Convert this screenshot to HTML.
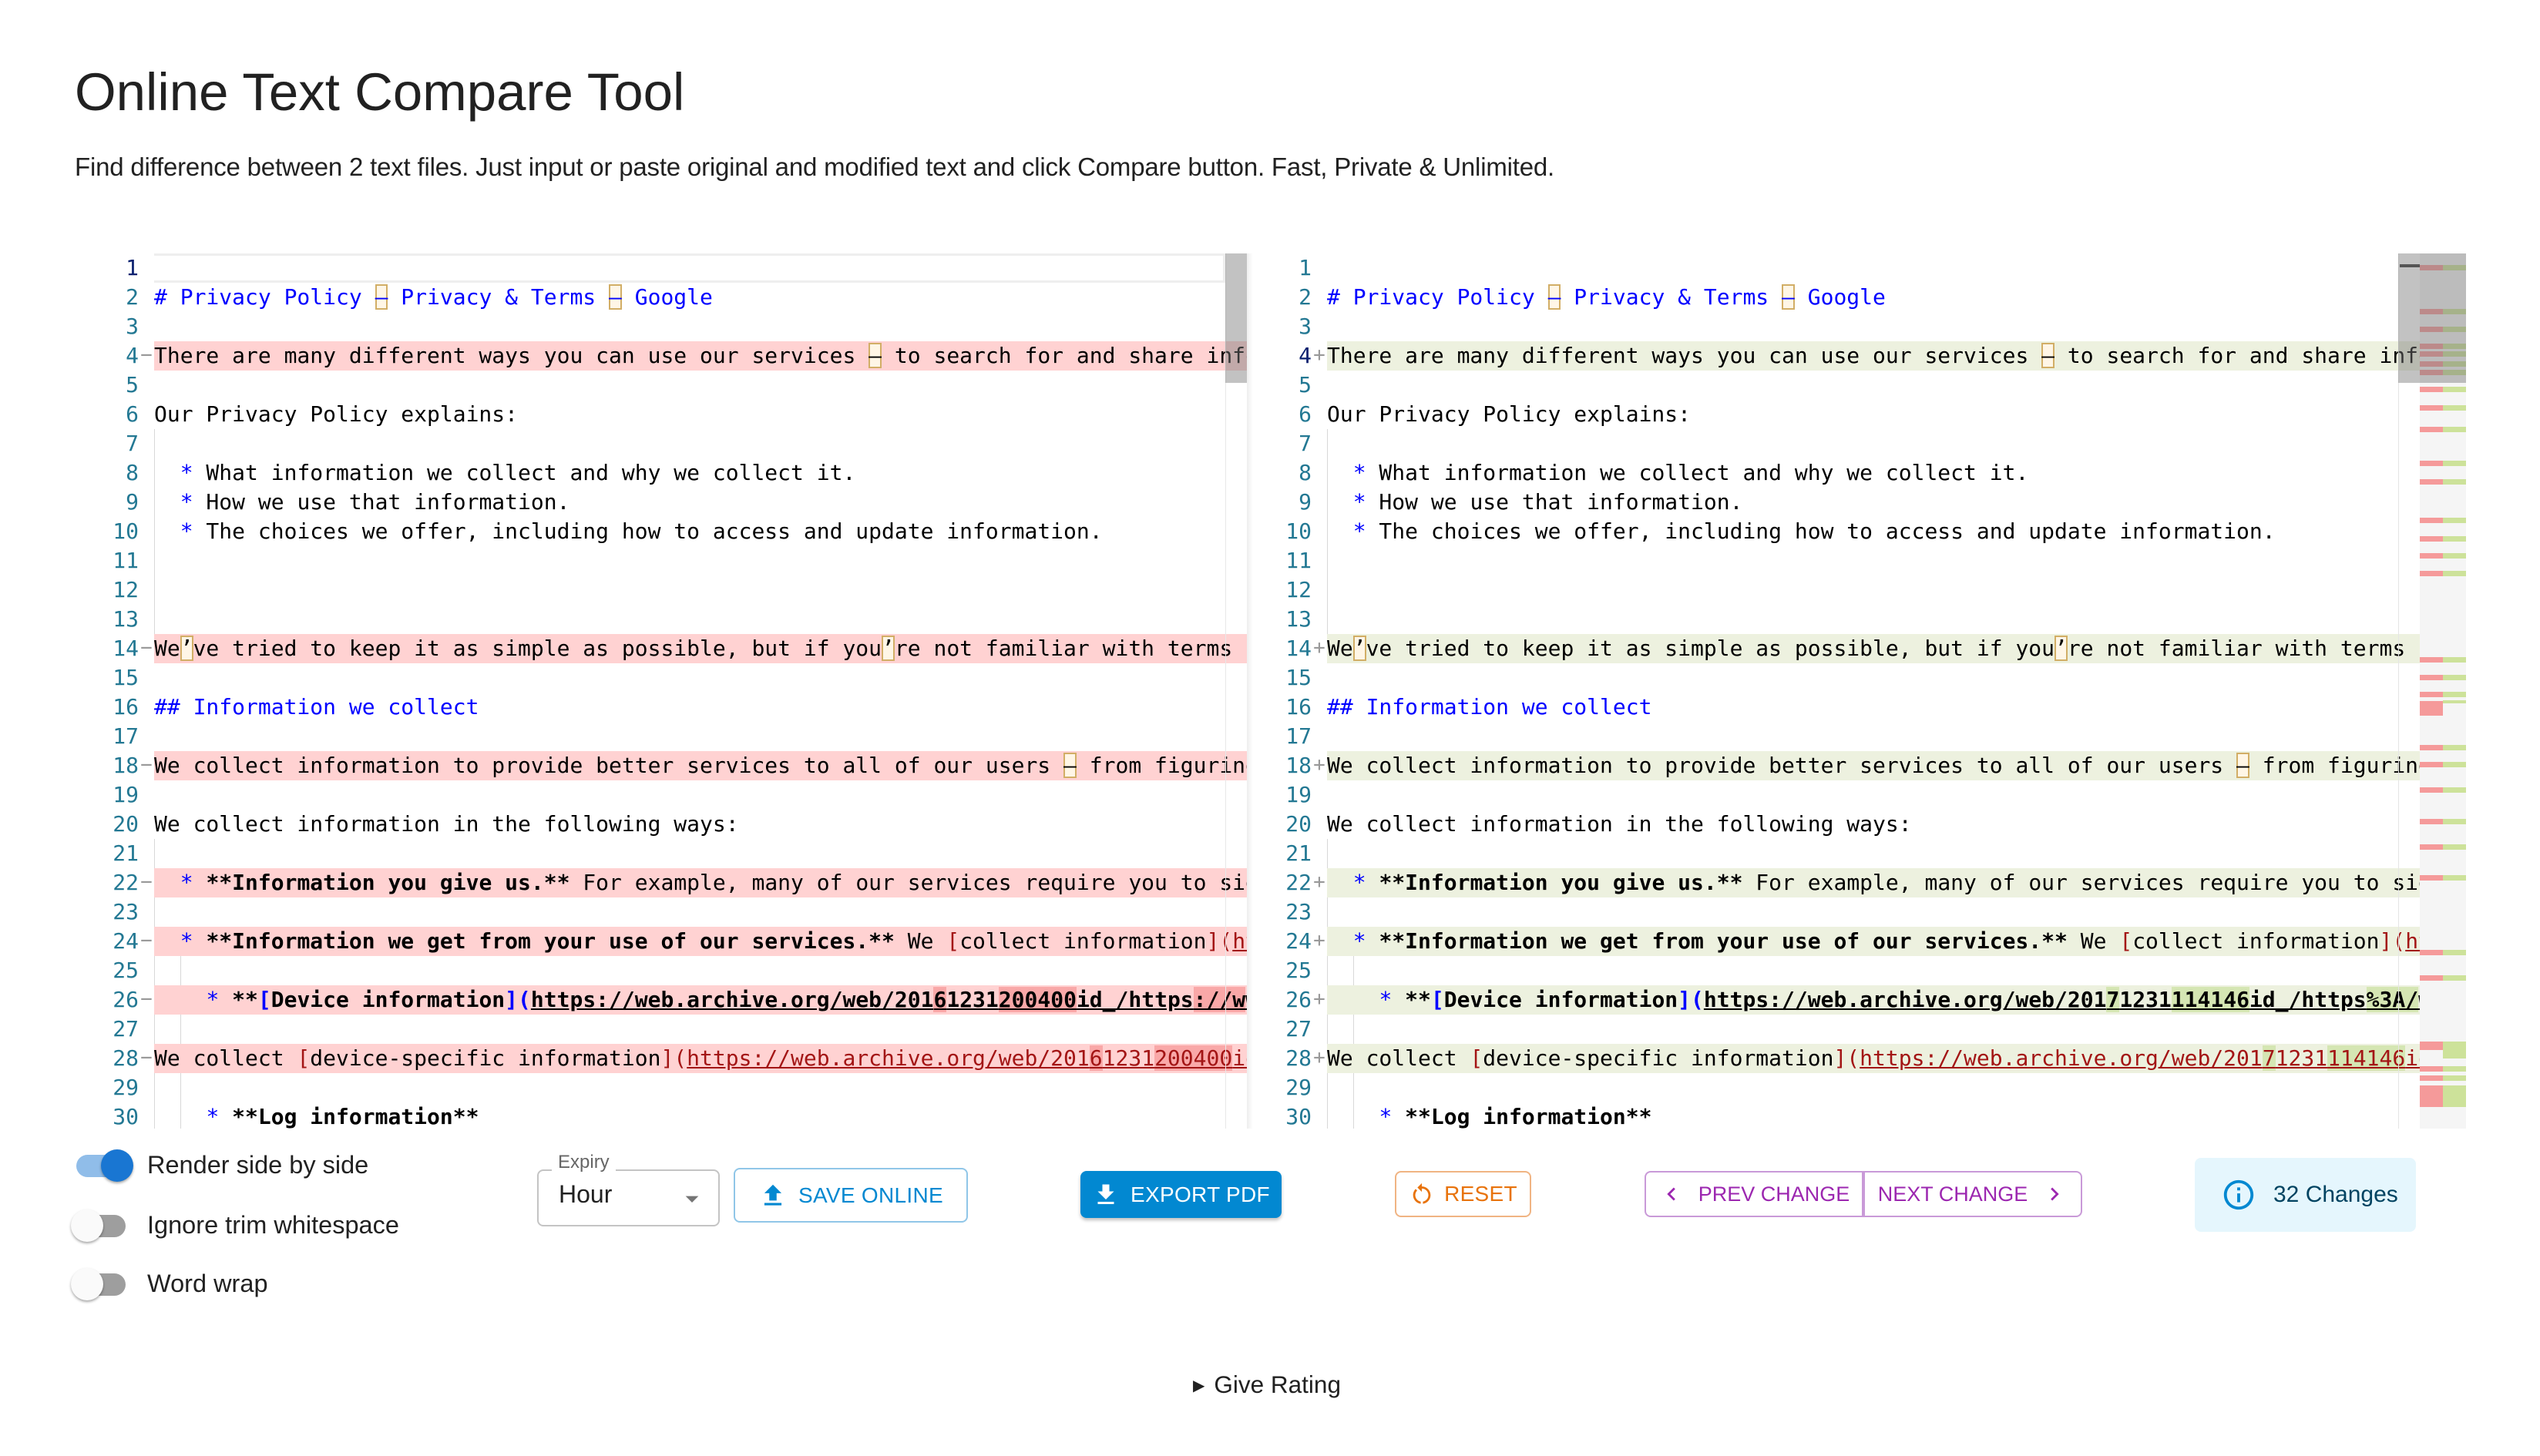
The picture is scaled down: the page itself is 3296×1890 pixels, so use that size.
<!DOCTYPE html>
<html><head><meta charset="utf-8">
<style>
*{margin:0;padding:0;box-sizing:border-box}
body{width:3296px;height:1890px;background:#fff;position:relative;overflow:hidden;font-family:"Liberation Sans",sans-serif;color:#212121}
.abs{position:absolute}
.ed{position:absolute;top:329px;height:1136px;overflow:hidden;font-family:"DejaVu Sans Mono",monospace;font-size:28px}
.ln{position:absolute;height:38px;line-height:38px;white-space:pre;color:#000}
.num{position:absolute;width:60px;text-align:right;height:38px;line-height:38px;color:#237893;font-family:"DejaVu Sans Mono",monospace;font-size:28px}
.mk{position:absolute;width:20px;text-align:center;height:38px;line-height:36px;color:#999;font-family:"DejaVu Sans Mono",monospace;font-size:26px}
.del{background:#ffd2d2}
.ins{background:#edf1df}
.dc{background:#f9a8a8}
.ic{background:#d5e6b3}
.b{color:#0000ff}
.r{color:#a31515}
.u{text-decoration:underline}
.bo{font-weight:bold}
.uc{box-shadow:inset 0 0 0 2px #d2ae66;background:#fff6e6}
.guide{position:absolute;width:1px;background:#d8d8d8}
.btn{position:absolute;display:flex;align-items:center;justify-content:center;border-radius:8px;font-size:28px;letter-spacing:.3px}
.tg{position:absolute;width:64px;height:29px;border-radius:15px;background:#9e9e9e}
.th{position:absolute;width:42px;height:42px;border-radius:50%;background:#fafafa;box-shadow:0 2px 3px rgba(0,0,0,.35)}
.lbl{position:absolute;font-size:32.5px;color:#212121}
.mm{position:absolute;height:7px}
</style></head><body>

<div class="abs" style="left:97px;top:80px;font-size:69px;line-height:80px;letter-spacing:0;color:#212121">Online Text Compare Tool</div>
<div class="abs" style="left:97px;top:196px;font-size:33px;line-height:42px;letter-spacing:-0.2px;color:#212121">Find difference between 2 text files. Just input or paste original and modified text and click Compare button. Fast, Private &amp; Unlimited.</div>

<!-- LEFT EDITOR -->
<div class="ed" style="left:0;width:1618px">
  <div class="abs" style="left:200px;top:0;width:1390px;height:38px;border:3px solid #eeeeee;border-left:none"></div>
  <div class="guide" style="left:200px;top:228px;height:266px"></div>
  <div class="guide" style="left:200px;top:760px;height:380px"></div>
  <div class="guide" style="left:234px;top:912px;height:228px"></div>

  <div class="ln" style="left:200px;top:38px"><span class="b"># Privacy Policy <span class="uc">–</span> Privacy &amp; Terms <span class="uc">–</span> Google</span></div>
  <div class="ln del" style="left:200px;top:114px;width:1420px">There are many different ways you can use our services <span class="uc">–</span> to search for and share information</div>
  <div class="ln" style="left:200px;top:190px">Our Privacy Policy explains:</div>
  <div class="ln" style="left:200px;top:266px">  <span class="b">*</span> What information we collect and why we collect it.</div>
  <div class="ln" style="left:200px;top:304px">  <span class="b">*</span> How we use that information.</div>
  <div class="ln" style="left:200px;top:342px">  <span class="b">*</span> The choices we offer, including how to access and update information.</div>
  <div class="ln del" style="left:200px;top:494px;width:1420px">We<span class="uc">’</span>ve tried to keep it as simple as possible, but if you<span class="uc">’</span>re not familiar with terms like cookies</div>
  <div class="ln" style="left:200px;top:570px"><span class="b">## Information we collect</span></div>
  <div class="ln del" style="left:200px;top:646px;width:1420px">We collect information to provide better services to all of our users <span class="uc">–</span> from figuring out basic stuff</div>
  <div class="ln" style="left:200px;top:722px">We collect information in the following ways:</div>
  <div class="ln del" style="left:200px;top:798px;width:1420px">  <span class="b">*</span> <span class="bo">**Information you give us.**</span> For example, many of our services require you to sign up</div>
  <div class="ln del" style="left:200px;top:874px;width:1420px">  <span class="b">*</span> <span class="bo">**Information we get from your use of our services.**</span> We <span class="r">[</span>collect information<span class="r">](<span class="u">https://</span></span></div>
  <div class="ln del" style="left:200px;top:950px;width:1420px">    <span class="b">*</span> <span class="bo">**<span class="b">[</span>Device information<span class="b">](</span><span class="u">https://web.archive.org/web/201<span class="dc">6</span>1231<span class="dc">200400</span>id_/https<span class="dc">://w</span>ww</span></span></div>
  <div class="ln del" style="left:200px;top:1026px;width:1420px">We collect <span class="r">[</span>device-specific information<span class="r">](<span class="u">https://web.archive.org/web/201<span class="dc">6</span>1231<span class="dc">200400</span>id_</span></span></div>
  <div class="ln" style="left:200px;top:1102px">    <span class="b">*</span> <span class="bo">**Log information**</span></div>

  <div class="abs" style="left:1590px;top:0;width:1px;height:1140px;background:#e8e8e8"></div>
  <div class="abs" style="left:1590px;top:0;width:28px;height:168px;background:rgba(120,120,120,.45)"></div>
</div>
<div class="abs" style="left:1618px;top:329px;width:8px;height:1136px;background:linear-gradient(to right,#eee,#fff)"></div>

<div id="lnums"></div>

<!-- RIGHT EDITOR -->
<div class="ed" style="left:1626px;width:1574px">
  <div class="guide" style="left:96px;top:228px;height:266px"></div>
  <div class="guide" style="left:96px;top:760px;height:380px"></div>
  <div class="guide" style="left:130px;top:912px;height:228px"></div>

  <div class="ln" style="left:96px;top:38px"><span class="b"># Privacy Policy <span class="uc">–</span> Privacy &amp; Terms <span class="uc">–</span> Google</span></div>
  <div class="ln ins" style="left:96px;top:114px;width:1418px">There are many different ways you can use our services <span class="uc">–</span> to search for and share information</div>
  <div class="ln" style="left:96px;top:190px">Our Privacy Policy explains:</div>
  <div class="ln" style="left:96px;top:266px">  <span class="b">*</span> What information we collect and why we collect it.</div>
  <div class="ln" style="left:96px;top:304px">  <span class="b">*</span> How we use that information.</div>
  <div class="ln" style="left:96px;top:342px">  <span class="b">*</span> The choices we offer, including how to access and update information.</div>
  <div class="ln ins" style="left:96px;top:494px;width:1418px">We<span class="uc">’</span>ve tried to keep it as simple as possible, but if you<span class="uc">’</span>re not familiar with terms like cookies</div>
  <div class="ln" style="left:96px;top:570px"><span class="b">## Information we collect</span></div>
  <div class="ln ins" style="left:96px;top:646px;width:1418px">We collect information to provide better services to all of our users <span class="uc">–</span> from figuring out basic stuff</div>
  <div class="ln" style="left:96px;top:722px">We collect information in the following ways:</div>
  <div class="ln ins" style="left:96px;top:798px;width:1418px">  <span class="b">*</span> <span class="bo">**Information you give us.**</span> For example, many of our services require you to sign up</div>
  <div class="ln ins" style="left:96px;top:874px;width:1418px">  <span class="b">*</span> <span class="bo">**Information we get from your use of our services.**</span> We <span class="r">[</span>collect information<span class="r">](<span class="u">https://</span></span></div>
  <div class="ln ins" style="left:96px;top:950px;width:1418px">    <span class="b">*</span> <span class="bo">**<span class="b">[</span>Device information<span class="b">](</span><span class="u">https://web.archive.org/web/201<span class="ic">7</span>1231<span class="ic">114146</span>id_/https<span class="ic">%3A/</span>ww</span></span></div>
  <div class="ln ins" style="left:96px;top:1026px;width:1418px">We collect <span class="r">[</span>device-specific information<span class="r">](<span class="u">https://web.archive.org/web/201<span class="ic">7</span>1231<span class="ic">114146</span>id_</span></span></div>
  <div class="ln" style="left:96px;top:1102px">    <span class="b">*</span> <span class="bo">**Log information**</span></div>

  <div class="abs" style="left:1486px;top:0;width:1px;height:1140px;background:#e5e5e5"></div>
  <div class="abs" style="left:1514px;top:0;width:60px;height:1136px;background:#f5f5f5"></div>
  <div id="mm"></div>
  <div class="abs" style="left:1486px;top:0;width:88px;height:168px;background:rgba(120,120,120,.45)"></div>
  <div class="abs" style="left:1488px;top:14px;width:26px;height:4px;background:#555"></div>
</div>

<div id="rnums"></div>

<!-- CONTROLS -->
<div class="tg" style="left:99px;top:1499px;background:#90bde9"></div>
<div class="th" style="left:131px;top:1492px;background:#1976d2"></div>
<div class="lbl" style="left:191px;top:1494px">Render side by side</div>

<div class="tg" style="left:99px;top:1577px"></div>
<div class="th" style="left:92px;top:1570px"></div>
<div class="lbl" style="left:191px;top:1572px">Ignore trim whitespace</div>

<div class="tg" style="left:99px;top:1653px"></div>
<div class="th" style="left:92px;top:1646px"></div>
<div class="lbl" style="left:191px;top:1648px">Word wrap</div>

<div class="abs" style="left:697px;top:1518px;width:237px;height:74px;border:2px solid #c4c4c4;border-radius:8px"></div>
<div class="abs" style="left:716px;top:1494px;background:#fff;padding:0 8px;font-size:24px;color:#666;line-height:30px">Expiry</div>
<div class="abs" style="left:725px;top:1528px;font-size:32px;line-height:44px;color:#212121">Hour</div>
<svg class="abs" style="left:878px;top:1536px" width="40" height="40" viewBox="0 0 24 24"><path d="M7 10l5 5 5-5z" fill="#757575"/></svg>

<div class="btn" style="left:952px;top:1516px;width:304px;height:71px;border:2px solid #90c6e8;color:#0288d1">
  <svg width="38" height="38" viewBox="0 0 24 24" style="margin-right:14px"><path d="M9 16h6v-6h4l-7-7-7 7h4zm-4 2h14v2H5z" fill="#0288d1"/></svg>SAVE ONLINE</div>

<div class="btn" style="left:1402px;top:1520px;width:261px;height:61px;background:#0288d1;color:#fff;box-shadow:0 3px 4px rgba(0,0,0,.25)">
  <svg width="36" height="36" viewBox="0 0 24 24" style="margin-right:14px"><path d="M19 9h-4V3H9v6H5l7 7 7-7zM5 18v2h14v-2H5z" fill="#fff"/></svg>EXPORT PDF</div>

<div class="btn" style="left:1810px;top:1520px;width:177px;height:60px;border:2px solid #f0b483;color:#e8730c">
  <svg width="34" height="34" viewBox="0 0 24 24" style="margin-right:12px"><path d="M12 5V2L8 6l4 4V7c3.31 0 6 2.69 6 6 0 2.97-2.17 5.43-5 5.91v2.02c3.95-.49 7-3.85 7-7.93 0-4.42-3.58-8-8-8zm-6 8c0-1.65.67-3.15 1.76-4.24L6.34 7.34C4.9 8.79 4 10.79 4 13c0 4.08 3.05 7.44 7 7.93v-2.02c-2.83-.48-5-2.94-5-5.91z" fill="#e8730c"/></svg>RESET</div>

<div class="btn" style="left:2134px;top:1520px;width:284px;height:60px;border:2px solid #c99ad8;color:#9c27b0;border-radius:8px 0 0 8px;font-size:27px;letter-spacing:0">
  <svg width="34" height="34" viewBox="0 0 24 24" style="margin-right:18px"><path d="M15.41 7.41 14 6l-6 6 6 6 1.41-1.41L10.83 12z" fill="#9c27b0"/></svg>PREV CHANGE</div>
<div class="btn" style="left:2418px;top:1520px;width:284px;height:60px;border:2px solid #c99ad8;color:#9c27b0;border-radius:0 8px 8px 0;font-size:27px;letter-spacing:0">NEXT CHANGE
  <svg width="34" height="34" viewBox="0 0 24 24" style="margin-left:18px"><path d="M10 6 8.59 7.41 13.17 12l-4.58 4.59L10 18l6-6z" fill="#9c27b0"/></svg></div>

<div class="abs" style="left:2848px;top:1503px;width:287px;height:96px;background:#e5f6fd;border-radius:8px;display:flex;align-items:center;padding-left:34px;font-size:30px;color:#014361">
  <svg width="46" height="46" viewBox="0 0 24 24" style="margin-right:22px"><path d="M11 7h2v2h-2zm0 4h2v6h-2zm1-9C6.48 2 2 6.48 2 12s4.48 10 10 10 10-4.48 10-10S17.52 2 12 2zm0 18c-4.41 0-8-3.59-8-8s3.59-8 8-8 8 3.59 8 8-3.59 8-8 8z" fill="#0288d1"/></svg>32 Changes</div>

<div class="abs" style="left:1548px;top:1776px;font-size:31.5px;line-height:42px;color:#212121"><span style="font-size:20px;vertical-align:3px;margin-right:12px">&#9654;</span>Give Rating</div>

<script>
(function(){
  var changed=[4,14,18,22,24,26,28];
  var L=document.getElementById('lnums'),R=document.getElementById('rnums'),h='',r='';
  for(var n=1;n<=30;n++){
    var top=329+(n-1)*38;
    if(top+38>1470)break;
    var c1=n==1?'#0b216f':'#237893', c2=n==4?'#0b216f':'#237893';
    h+='<div class="num" style="left:120px;top:'+top+'px;color:'+c1+'">'+n+'</div>';
    r+='<div class="num" style="left:1642px;top:'+top+'px;color:'+c2+'">'+n+'</div>';
    if(changed.indexOf(n)>=0){
      h+='<div class="mk" style="left:180px;top:'+top+'px">−</div>';
      r+='<div class="mk" style="left:1702px;top:'+top+'px">+</div>';
    }
  }
  L.innerHTML=h;R.innerHTML=r;
  var ys=[347,404,427,449,459,472,483,505,529,557,601,625,675,699,721,744,856,879,901,970,992,1025,1066,1099,1139,1236,1269,1387,1399];
  var m='';
  ys.forEach(function(y){var t=y-329-3;
    m+='<div class="mm" style="left:1514px;top:'+t+'px;width:30px;background:#f59a9a"></div>';
    m+='<div class="mm" style="left:1544px;top:'+t+'px;width:30px;background:#cde29a"></div>';});
  m+='<div class="mm" style="left:1514px;top:'+(910-329)+'px;width:30px;height:19px;background:#f59a9a"></div>';
  m+='<div class="mm" style="left:1544px;top:'+(909-329)+'px;width:30px;height:4px;background:#cde29a"></div>';
  m+='<div class="mm" style="left:1514px;top:'+(1352-329)+'px;width:30px;height:11px;background:#f59a9a"></div>';
  m+='<div class="mm" style="left:1544px;top:'+(1352-329)+'px;width:30px;height:22px;background:#cde29a"></div>';
  m+='<div class="mm" style="left:1514px;top:'+(1409-329)+'px;width:30px;height:28px;background:#f59a9a"></div>';
  m+='<div class="mm" style="left:1544px;top:'+(1409-329)+'px;width:30px;height:28px;background:#cde29a"></div>';
  document.getElementById('mm').innerHTML=m;
})();
</script>
</body></html>
